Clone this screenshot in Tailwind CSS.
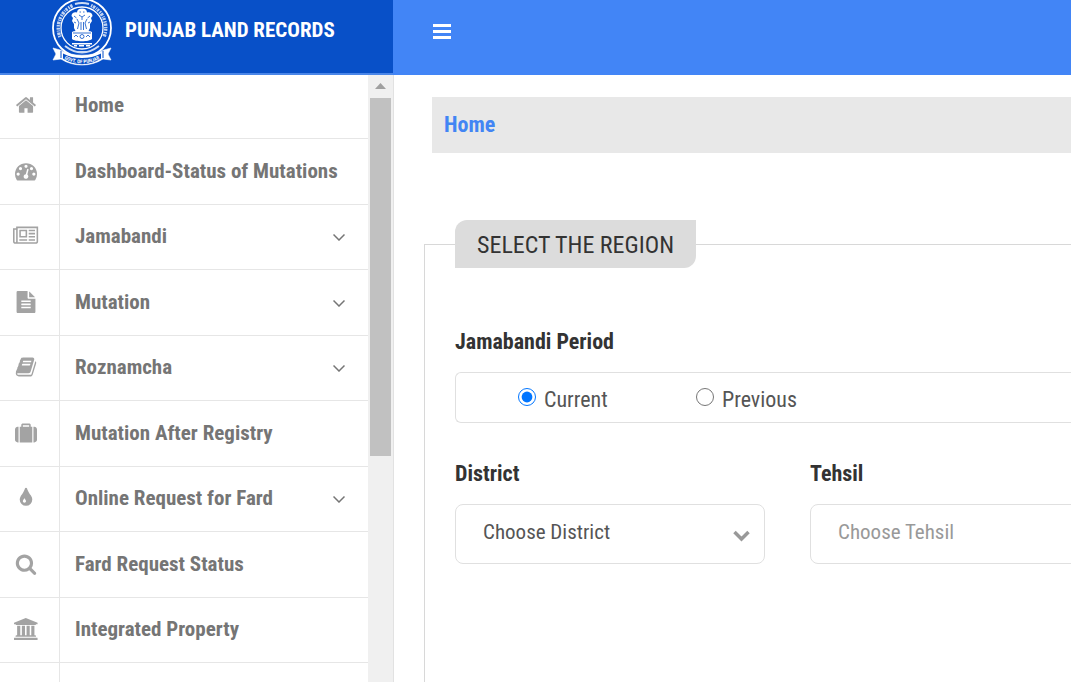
<!DOCTYPE html>
<html lang="en">
<head>
<meta charset="utf-8">
<meta name="viewport" content="width=device-width, initial-scale=1">
<title>Punjab Land Records</title>
<script src="https://cdn.jsdelivr.net/npm/@tailwindcss/browser@4"></script>
</head>
<body class="flex h-screen flex-col overflow-hidden bg-white font-['Roboto_Condensed','Liberation_Sans_Narrow',Roboto,sans-serif] text-[#333]">
<header class="z-10 flex h-[75px] shrink-0 bg-[#4285f6]">
  <a href="#" class="flex w-[393px] shrink-0 items-start gap-3 border-b-2 border-[#4a86e8] bg-[#0850c8] pl-[51px] text-white">
    <svg class="h-[68px] w-[62px] shrink-0" viewBox="0 0 62 68" fill="none" stroke="#fff" aria-hidden="true">
      <circle cx="31" cy="28" r="29" stroke-width="1.8"/>
      <circle cx="31" cy="28" r="21" stroke-width="1.3"/>
      <path d="M9 37A24.500 24.500 0 0 1 22 5.500M40 5.500A24.500 24.500 0 0 1 53 37" stroke-width="3.500" stroke-dasharray="1.500 .8 2.500 1 1 .7 2 1.200" opacity=".75"/>
      <path d="M24 4q7-2 14 0M14 46q17 13 34 0M26 52h10" stroke-width="2" opacity=".8"/>
      <g fill="#fff" stroke="none">
        <path d="M31 8.500c-3 0-5 1.500-5 4-3-1-5.500 1-5.500 3.500l1.500 2-1 3 2 3v4l2 4h12l2-4v-4l2-3-1-3 1.500-2c0-2.500-2.500-4.500-5.500-3.500 0-2.500-2-4-5-4z"/>
        <path d="M21 32c3-2 17-2 20 0v7c-3 3-17 3-20 0zM21 43h20v1.500H21zM23 45h3v1.500h-3zM28 45h5v1.500h-5zM35 45h4v1.500h-4z"/>
      </g>
      <g stroke="#0850c8" stroke-width=".8">
        <path d="M28.500 12h1.500m2 0h1.500M28 15l3 2 3-2M31 17v3M23 16l2.500 2M39 16l-2.500 2M26 19l2 4-1.500 6M36 19l-2 4 1.500 6M30 22v8M32.500 22v8M23 22l2 1M39 22l-2 1M22 33h18"/>
        <circle cx="31" cy="36.500" r="2"/><path d="M23 37l2-2 2 2M39 37l-2-2-2 2"/>
      </g>
      <path d="M2 48l7 2c12 7 32 7 44 0l7-2-3 6 3 6-8-1c-12 8-30 8-42 0l-8 1 3-6z" fill="#fff" stroke-width=".6"/>
      <path d="M10 51v7M52 51v7" stroke="#0850c8"/>
      <path d="M12 53.500c11 6 27 6 38 0v5c-11 7.500-27 7.500-38 0z" fill="#0850c8" stroke="none"/>
      <path id="motto" d="M12 58c11 7 27 7 38 0" stroke="none"/>
      <text fill="#fff" stroke="none" font-size="5" font-weight="700"><textPath href="#motto" startOffset="50%" text-anchor="middle">GOVT. OF PUNJAB</textPath></text>
    </svg>
    <span class="pt-4 text-[21px] leading-7 font-bold whitespace-nowrap">PUNJAB LAND RECORDS</span>
  </a>
  <button type="button" aria-label="Toggle menu" class="ml-10 h-[62px] w-5 text-white">
    <svg class="h-4 w-[18px]" viewBox="0 0 18 16" fill="currentColor"><path d="M0 1h18v3H0zM0 7h18v3H0zM0 13h18v3H0z"/></svg>
  </button>
</header>
<div class="flex min-h-0 grow">
  <aside class="flex w-[394px] shrink-0 overflow-hidden border-r border-[#e2e2e2]">
    <nav class="grow">
      <ul class="-mt-px text-[21px] font-bold text-[#757575] [&_a]:flex [&_a]:h-full [&_a]:items-center [&_li]:border-b [&_li]:border-[#e6e6e6] [&_li:nth-child(odd)]:h-[65px] [&_li:nth-child(even)]:h-[66px] [&_i]:mr-[15px] [&_i]:flex [&_i]:h-full [&_i]:w-[60px] [&_i]:shrink-0 [&_i]:items-center [&_i]:justify-center [&_i]:border-r [&_i]:border-[#e6e6e6] [&_i]:pr-[7px] [&_i]:pb-0.5 [&_i]:text-[#a3a3a3] [&_i_svg]:h-[22px] [&_i_svg]:fill-current [&_span]:grow">
        <li><a href="#"><i><svg viewBox="0 0 1792 1792"><path d="M1472 992v480q0 26-19 45t-45 19h-384v-384h-256v384h-384q-26 0-45-19t-19-45v-480q0-1 .5-3t.5-3l575-474 575 474q1 2 1 6zm223-69l-62 74q-8 9-21 11h-3q-13 0-21-7l-692-577-692 577q-12 8-24 7-13-2-21-11l-62-74q-8-10-7-23.5t11-21.5l719-599q32-26 76-26t76 26l244 204v-195q0-14 9-23t23-9h192q14 0 23 9t9 23v408l219 182q10 8 11 21.5t-7 23.5z"/></svg></i><span>Home</span></a></li>
        <li><a href="#"><i><svg viewBox="0 0 1792 1792"><path d="M384 1152q0-53-37.500-90.500t-90.500-37.500-90.500 37.500-37.500 90.500 37.500 90.500 90.500 37.500 90.500-37.500 37.500-90.500zm192-448q0-53-37.500-90.500t-90.500-37.500-90.500 37.500-37.500 90.500 37.500 90.500 90.500 37.500 90.500-37.500 37.500-90.500zm428 481l101-382q6-26-7.500-48.500t-38.500-29.500-48 6.500-30 39.500l-101 382q-60 5-107 43.500t-63 98.500q-20 77 20 146t117 89 146-20 89-117q16-60-6-117t-72-91zm660-33q0-53-37.500-90.500t-90.500-37.500-90.500 37.500-37.500 90.500 37.500 90.500 90.500 37.500 90.500-37.500 37.500-90.500zm-640-640q0-53-37.500-90.500t-90.500-37.500-90.500 37.500-37.500 90.500 37.500 90.500 90.500 37.500 90.500-37.500 37.500-90.500zm448 192q0-53-37.500-90.500t-90.500-37.500-90.500 37.500-37.500 90.500 37.500 90.500 90.500 37.500 90.500-37.500 37.500-90.500zm320 448q0 261-141 483-19 29-54 29h-1402q-35 0-54-29-141-221-141-483 0-182 71-348t191-286 286-191 348-71 348 71 286 191 191 286 71 348z"/></svg></i><span>Dashboard-Status of Mutations</span></a></li>
        <li><a href="#"><i><svg viewBox="0 0 2048 1792"><path d="M1024 512h-384v384h384v-384zm128 640v128h-640v-128h640zm0-768v640h-640v-640h640zm640 768v128h-512v-128h512zm0-256v128h-512v-128h512zm0-256v128h-512v-128h512zm0-256v128h-512v-128h512zm-1536 960v-960h-128v960q0 26 19 45t45 19 45-19 19-45zm1664 0v-1088h-1536v1088q0 33-11 64h1483q26 0 45-19t19-45zm128-1216v1216q0 80-56 136t-136 56h-1664q-80 0-136-56t-56-136v-1088h256v-128h1792z"/></svg></i><span>Jamabandi</span><svg class="mr-[23px] h-2 w-3 shrink-0" viewBox="0 0 12 8" fill="none" stroke="currentColor" stroke-width="1.5"><path d="M.5 1.500L6 7l5.500-5.500"/></svg></a></li>
        <li><a href="#"><i><svg viewBox="0 0 1792 1792"><path d="M1596 476q14 14 28 36h-472v-472q22 14 36 28zm-476 164h544v1056q0 40-28 68t-68 28h-1344q-40 0-68-28t-28-68v-1600q0-40 28-68t68-28h800v544q0 40 28 68t68 28zm160 736v-64q0-14-9-23t-23-9h-704q-14 0-23 9t-9 23v64q0 14 9 23t23 9h704q14 0 23-9t9-23zm0-256v-64q0-14-9-23t-23-9h-704q-14 0-23 9t-9 23v64q0 14 9 23t23 9h704q14 0 23-9t9-23zm0-256v-64q0-14-9-23t-23-9h-704q-14 0-23 9t-9 23v64q0 14 9 23t23 9h704q14 0 23-9t9-23z"/></svg></i><span>Mutation</span><svg class="mr-[23px] h-2 w-3 shrink-0" viewBox="0 0 12 8" fill="none" stroke="currentColor" stroke-width="1.5"><path d="M.5 1.500L6 7l5.500-5.500"/></svg></a></li>
        <li><a href="#"><i><svg viewBox="0 0 1792 1792"><path d="M1703 478q40 57 18 129l-275 906q-19 64-76.500 107.500t-122.500 43.500h-923q-77 0-148.500-53.500t-99.500-131.500q-24-67-2-127 0-4 3-27t4-37q1-8-3-21.500t-3-19.500q2-11 8-21t16.500-23.500 16.500-23.500q23-38 45-91.500t30-91.500q3-10 .5-30t-.5-28q3-11 17-28t17-23q21-36 42-92t25-90q1-9-2.500-32t.5-28q4-13 22-30.500t22-22.500q19-26 42.500-84.500t27.500-96.500q1-8-3-25.500t-2-26.500q2-8 9-18t18-23 17-21q8-12 16.500-30.500t15-35 16-36 19.500-32 26.500-23.500 36-11.500 47.500 5.500l-1 3q38-9 51-9h761q74 0 114 56t18 130l-274 906q-36 119-71.500 153.500t-128.500 34.500h-869q-27 0-38 15-11 16-1 43 24 70 144 70h923q29 0 56-15.500t35-41.500l300-987q7-22 5-57 38 15 59 43zm-1064 2q-4 13 2 22.500t20 9.500h608q13 0 25.500-9.500t16.500-22.500l21-64q4-13-2-22.500t-20-9.500h-608q-13 0-25.500 9.500t-16.500 22.500zm-83 256q-4 13 2 22.500t20 9.500h608q13 0 25.500-9.500t16.500-22.500l21-64q4-13-2-22.500t-20-9.500h-608q-13 0-25.500 9.500t-16.500 22.500z"/></svg></i><span>Roznamcha</span><svg class="mr-[23px] h-2 w-3 shrink-0" viewBox="0 0 12 8" fill="none" stroke="currentColor" stroke-width="1.5"><path d="M.5 1.500L6 7l5.500-5.500"/></svg></a></li>
        <li><a href="#"><i><svg viewBox="0 0 1792 1792"><path d="M640 384h512v-128h-512v128zm-352 0v1280h-64q-92 0-158-66t-66-158v-832q0-92 66-158t158-66h64zm1120 0v1280h-1024v-1280h128v-160q0-40 28-68t68-28h576q40 0 68 28t28 68v160h128zm384 224v832q0 92-66 158t-158 66h-64v-1280h64q92 0 158 66t66 158z"/></svg></i><span>Mutation After Registry</span></a></li>
        <li><a href="#"><i><svg viewBox="0 0 1792 1792"><path d="M896 1152q0-36-20-69-1-1-15.500-22.500t-25.500-38-25-44-21-50.500q-4-16-21-16t-21 16q-7 23-21 50.500t-25 44-25.500 38-15.500 22.500q-20 33-20 69 0 53 37.500 90.500t90.500 37.500 90.500-37.500 37.500-90.500zm512-128q0 212-150 362t-362 150-362-150-150-362q0-145 81-275 6-9 62.500-90.500t101-151 99.500-178 83-201.500q9-30 34-47t51-17 51.500 17 33.500 47q28 93 83 201.500t99.500 178 101 151 62.500 90.500q81 127 81 275z"/></svg></i><span>Online Request for Fard</span><svg class="mr-[23px] h-2 w-3 shrink-0" viewBox="0 0 12 8" fill="none" stroke="currentColor" stroke-width="1.5"><path d="M.5 1.500L6 7l5.500-5.500"/></svg></a></li>
        <li><a href="#"><i><svg viewBox="0 0 1792 1792"><path d="M1216 832q0-185-131.500-316.500t-316.500-131.500-316.500 131.500-131.500 316.500 131.500 316.500 316.500 131.500 316.500-131.500 131.500-316.500zm512 832q0 52-38 90t-90 38q-54 0-90-38l-343-342q-179 124-399 124-143 0-273.500-55.500t-225-150-150-225-55.500-273.500 55.500-273.500 150-225 225-150 273.500-55.500 273.500 55.500 225 150 150 225 55.500 273.500q0 220-124 399l343 343q37 37 37 90z"/></svg></i><span>Fard Request Status</span></a></li>
        <li><a href="#"><i><svg viewBox="0 0 1920 1792"><path d="M960 0l960 384v128h-128q0 26-20.500 45t-48.500 19h-1526q-28 0-48.500-19t-20.500-45h-128v-128zm-704 640h256v768h128v-768h256v768h128v-768h256v768h128v-768h256v768h59q28 0 48.500 19t20.500 45v64h-1664v-64q0-26 20.500-45t48.500-19h59v-768zm1595 960q28 0 48.500 19t20.500 45v128h-1920v-128q0-26 20.500-45t48.500-19h1782z"/></svg></i><span>Integrated Property</span></a></li>
        <li><a href="#" aria-label="More"><i></i></a></li>
      </ul>
    </nav>
    <div class="flex w-[25px] shrink-0 flex-col bg-[#f0f0f0] pr-0.5 pl-0.5" aria-hidden="true">
      <svg class="h-[23px] w-full shrink-0" viewBox="0 0 21 23" fill="#a0a0a0"><path d="M5 14l5.500-6 5.500 6z"/></svg>
      <div class="h-[59%] bg-[#c1c1c1]"></div>
    </div>
  </aside>
  <main class="min-w-0 grow overflow-hidden pt-[22px] pl-[30px]">
    <nav class="ml-2 flex h-14 items-center bg-[#e8e8e8] px-3 pb-0.5 text-[22px] font-bold text-[#4285f4]" aria-label="Breadcrumb"><a href="#">Home</a></nav>
    <fieldset class="mt-[67px] h-full border-t border-l border-[#d8d8d8] pl-[30px]">
      <legend class="flex h-12 items-center rounded-tl-xl rounded-br-xl bg-[#dcdcdc] px-[22px] pt-0.5 text-2xl">SELECT THE REGION</legend>
      <h2 id="period" class="mt-14 text-[22px] leading-9 font-bold">Jamabandi Period</h2>
      <div role="radiogroup" aria-labelledby="period" class="mt-3 flex h-[51px] items-center rounded-l-md border border-r-0 border-[#e0e0e0] pt-[3px] pl-[62px] text-[22px] text-[#555]">
        <label class="flex w-[178px] items-center gap-2"><input type="radio" name="period" checked class="mb-1 size-[18px] accent-[#0075ff]">Current</label>
        <label class="flex items-center gap-2"><input type="radio" name="period" class="mb-1 size-[18px] accent-[#0075ff]">Previous</label>
      </div>
      <div class="mt-[33px] flex gap-[45px] [&>div]:w-[310px] [&>div]:shrink-0 [&_label]:block [&_label]:text-[22px] [&_label]:leading-9 [&_label]:font-bold [&_select]:h-[60px] [&_select]:w-full [&_select]:appearance-none [&_select]:rounded-lg [&_select]:border [&_select]:border-[#e0e0e0] [&_select]:pb-0.5 [&_select]:pl-[27px] [&_select]:text-[21px]">
        <div>
          <label for="district">District</label>
          <div class="relative mt-3">
            <select id="district" class="text-[#555]"><option>Choose District</option></select>
            <svg class="pointer-events-none absolute top-[26px] right-[15px] h-3 w-[17px]" viewBox="0 0 17 12" fill="none" stroke="#999" stroke-width="3.500"><path d="M1.500 2L8.500 9l7-7"/></svg>
          </div>
        </div>
        <div>
          <label for="tehsil">Tehsil</label>
          <div class="mt-3"><select id="tehsil" disabled class="text-[#999]"><option>Choose Tehsil</option></select></div>
        </div>
      </div>
    </fieldset>
  </main>
</div>
</body>
</html>
